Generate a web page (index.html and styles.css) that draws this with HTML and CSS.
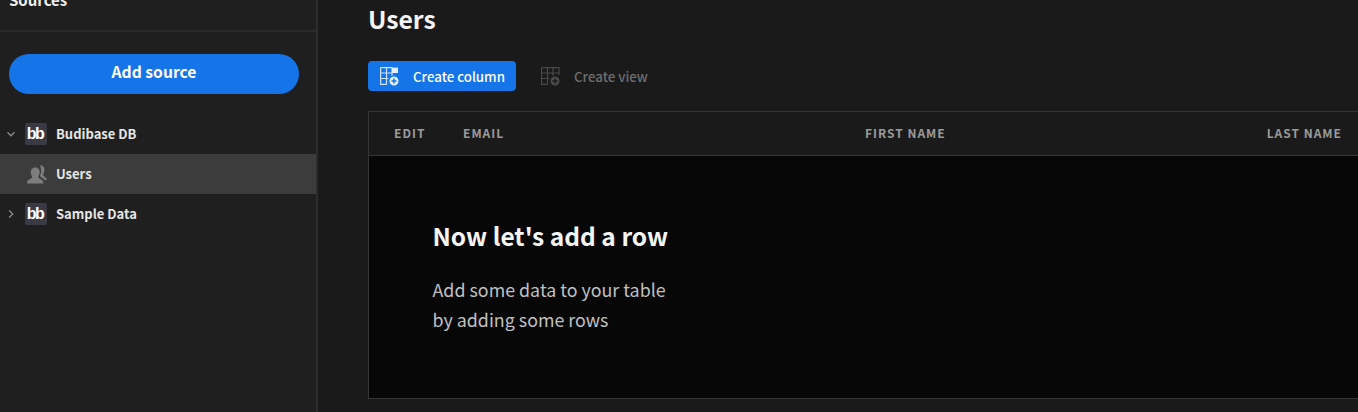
FILE: index.html
```html
<!DOCTYPE html>
<html lang="en">
<head>
<meta charset="utf-8">
<title>Users</title>
<link rel="stylesheet" href="styles.css">
</head>
<body>
<div class="app">
  <aside class="sidebar">
    <div class="side-head"><span class="side-title">Sources</span></div>
    <div class="add-wrap"><button class="add-btn">Add source</button></div>
    <ul class="tree">
      <li class="tree-row">
        <svg class="chev" viewBox="0 0 10 10"><path d="M1.500 3.200 5 6.800l3.500-3.600"/></svg>
        <span class="bb">bb</span><span class="tree-label">Budibase DB</span>
      </li>
      <li class="tree-row selected">
        <svg class="user-ico" viewBox="0 0 20 19"><path d="M13.200 .6c2.400-.7 4.100 1.200 4.200 3.800.1 2.600-1.200 4.300-1.200 5.700 0 1.200 1.800 2 2.800 3 .6.600.8 1.200.9 1.900h-2.600c-.7-1.500-2.300-2.300-3.700-3.100-.7-.5-.7-1.200-.2-2.400 1-2.400 1.100-6.100-.4-8.900zM13.800.9l.5-.1"/><path d="M8.300 2.500c3 0 4.700 2.300 4.400 5.200-.2 2-1.300 3.400-1.400 4.400-.1 1.200 2.100 2 3.600 2.900 1 .6 1.500 1.800 1.600 3.500H0c.1-1.700.6-2.900 1.600-3.500 1.500-.9 3.700-1.700 3.600-2.900-.1-1-1.200-2.400-1.400-4.400-.3-2.900 1.500-5.200 4.500-5.200z"/></svg>
        <span class="tree-label">Users</span>
      </li>
      <li class="tree-row">
        <svg class="chev" viewBox="0 0 10 10"><path d="M3.200 1.500 6.800 5 3.200 8.500"/></svg>
        <span class="bb">bb</span><span class="tree-label">Sample Data</span>
      </li>
    </ul>
  </aside>
  <main class="content">
    <h1 class="title">Users</h1>
    <div class="toolbar">
      <button class="tool primary">
        <svg class="tool-ico" viewBox="0 0 20 20"><path class="grid" d="M.6.6H12V6M.6.6V17.400H6.500M.6 6H12M.6 11.500H8.500M6.500.6V17.400M12 .6V9"/><path class="solid" d="M12 .6h6V6h-6z"/><circle class="disc" cx="14" cy="14" r="5.200"/><path class="plus" d="M11.500 14h5M14 11.500v5"/></svg>
        Create column
      </button>
      <button class="tool ghost">
        <svg class="tool-ico" viewBox="0 0 20 20"><path class="grid" d="M.6.6H18V8M.6.6V17.400H6.500M.6 6H18M.6 11.500H8.500M6.500.6V17.400M12 .6V9"/><circle class="disc" cx="14" cy="14" r="5.200"/><path class="plus" d="M11.500 14h5M14 11.500v5"/></svg>
        Create view
      </button>
    </div>
    <section class="table">
      <div class="thead">
        <span class="th th-edit">EDIT</span>
        <span class="th th-email">EMAIL</span>
        <span class="th th-first">FIRST NAME</span>
        <span class="th th-last">LAST NAME</span>
      </div>
      <div class="empty">
        <h2 class="empty-title">Now let's add a row</h2>
        <p class="empty-text">Add some data to your table<br>by adding some rows</p>
      </div>
    </section>
  </main>
</div>
</body>
</html>
```
FILE: styles.css
```css
* { box-sizing: border-box; }
html, body { margin: 0; height: 100%; overflow: hidden; }
body {
  background: #1a1a1a;
  color: #fff;
  font-family: "Noto Sans CJK JP", "Noto Sans", sans-serif;
}
.app { display: flex; height: 412px; }
.sidebar {
  width: 318px;
  flex: none;
  background: #1f1f1f;
  border-right: 2px solid #2b2b2b;
}
.side-head {
  height: 32px;
  border-bottom: 2px solid #2b2b2b;
  padding-left: 9px;
  overflow: hidden;
  display: flex;
  align-items: flex-end;
}
.side-title {
  display: block;
  font-size: 15px;
  font-weight: 700;
  line-height: 20px;
  margin-bottom: 20px;
  color: #f0f0f0;
}
.add-wrap { padding: 22px 17px 0 9px; }
.add-btn {
  display: block;
  width: 290px;
  height: 40px;
  border: 0;
  border-radius: 20px;
  background: #1574e8;
  color: #fff;
  font: 700 15.700px/36px "Noto Sans CJK JP", "Noto Sans", sans-serif;
  padding: 0 0 6px;
}
.tree { list-style: none; margin: 20px 0 0; padding: 0; }
.tree-row {
  height: 40px;
  display: flex;
  align-items: center;
  padding-left: 6px;
}
.tree-row.selected { background: #3c3c3c; }
.chev { width: 10px; height: 10px; margin-right: 9px; fill: none; stroke: #8a8a8a; stroke-width: 1.300; }
.bb {
  width: 22px;
  height: 22px;
  border-radius: 2px;
  background: #393a45;
  color: #fff;
  font: 700 16px/22px "Liberation Sans", sans-serif;
  letter-spacing: -1.500px;
  text-align: center;
  padding-right: 2px;
}
.tree-label {
  margin-left: 9px;
  font-size: 13px;
  font-weight: 700;
  line-height: 18px;
  color: #e6e6e6;
}
.user-ico { width: 20px; height: 19px; margin-left: 21px; fill: #7d7d7d; }
.user-ico + .tree-label { margin-left: 9px; }
.content { flex: 1; min-width: 0; padding-left: 50px; }
.title {
  margin: 2px 0 0;
  font-size: 24.700px;
  font-weight: 700;
  line-height: 32px;
  color: #f5f5f5;
}
.toolbar { display: flex; gap: 10px; margin-top: 27px; }
.tool {
  display: flex;
  align-items: center;
  height: 30px;
  border: 0;
  border-radius: 4px;
  font: 500 13.300px/18px "Noto Sans CJK JP", "Noto Sans", sans-serif;
  padding: 1px 11px 0 12px;
}
.tool-ico { width: 20px; height: 20px; margin-right: 13px; flex: none; }
.primary { width: 148px; background: #1574e8; color: #fff; }
.ghost { background: transparent; color: #6e6e6e; padding-left: 15px; }
.primary .grid { fill: none; stroke: #cfe2fa; stroke-width: 1.200; }
.primary .solid { fill: #e4eefc; }
.primary .disc { fill: #e4eefc; stroke: #1574e8; stroke-width: 1.300; }
.primary .plus { stroke: #1574e8; stroke-width: 1.500; }
.ghost .grid { fill: none; stroke: #484848; stroke-width: 1.200; }
.ghost .disc { fill: #4b4b4b; stroke: #1a1a1a; stroke-width: 1.300; }
.ghost .plus { stroke: #1a1a1a; stroke-width: 1.500; }
.table {
  margin-top: 20px;
  height: 288px;
  border: 1px solid #363636;
  border-right: 0;
  display: flex;
  flex-direction: column;
}
.thead {
  height: 44px;
  flex: none;
  border-bottom: 1px solid #363636;
  display: flex;
  align-items: center;
  background: #1a1a1a;
  padding-bottom: 2px;
}
.th {
  font-size: 12px;
  font-weight: 700;
  letter-spacing: 1px;
  line-height: 16px;
  color: #9a9a9a;
}
.th-edit { margin-left: 25px; width: 69px; }
.th-email { width: 402px; }
.th-first { flex: 1; }
.th-last { margin-right: 16px; }
.empty { flex: 1; background: #070707; padding: 63px 0 0 63.500px; }
.empty-title {
  margin: 0;
  font-size: 24.500px;
  font-weight: 700;
  line-height: 34px;
  color: #f5f5f5;
}
.empty-text {
  margin: 21px 0 0;
  font-size: 17.850px;
  font-weight: 400;
  line-height: 30px;
  color: #c0c0c0;
}
```
